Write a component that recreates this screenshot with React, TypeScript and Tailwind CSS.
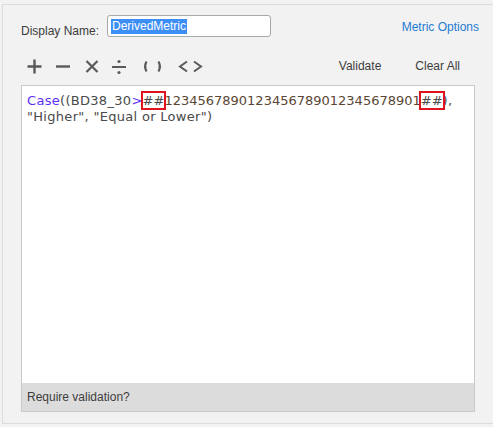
import React from 'react';

const Plus = () => (
  <svg width="17" height="17" viewBox="0 0 17 17">
    <path d="M8.5 1.5v14M1.5 8.5h14" stroke="#5a5a5a" strokeWidth="2.4" />
  </svg>
);
const Minus = () => (
  <svg width="16" height="17" viewBox="0 0 16 17">
    <path d="M1 8.5h14" stroke="#5a5a5a" strokeWidth="2.4" />
  </svg>
);
const Times = () => (
  <svg width="14" height="17" viewBox="0 0 14 17">
    <path d="M1.5 3l11 11M12.5 3l-11 11" stroke="#5a5a5a" strokeWidth="2.2" />
  </svg>
);
const Divide = () => (
  <svg width="16" height="17" viewBox="0 0 16 17">
    <path d="M1 9h14" stroke="#5a5a5a" strokeWidth="2" />
    <circle cx="8" cy="3.5" r="1.6" fill="#5a5a5a" />
    <circle cx="8" cy="14.5" r="1.6" fill="#5a5a5a" />
  </svg>
);
const Parens = () => (
  <svg width="21" height="17" viewBox="0 0 21 17">
    <path d="M4.5 3.5Q1.8 8.5 4.5 13.5M16.5 3.5Q19.2 8.5 16.5 13.5" stroke="#5a5a5a" strokeWidth="2.2" fill="none" />
  </svg>
);
const Angles = () => (
  <svg width="25" height="17" viewBox="0 0 25 17">
    <path d="M9 3.5L2 8.5l7 5M16 3.5l7 5-7 5" stroke="#5a5a5a" strokeWidth="2" fill="none" />
  </svg>
);

export default function App() {
  return (
    <div className="w-[493px] h-[427px] bg-[#f2f2f2] pt-[4px] pl-[2px] pb-[3px] font-['Liberation_Sans',Arial,sans-serif] text-[12px] text-[#333]">
      <div className="h-full border-t border-l border-b border-[#dcdcdc] flex flex-col">
        <div className="flex items-start pt-[10px] pl-[18px] pr-[14px] h-[46px]">
          <span className="mt-[7px] w-[86px] text-[#3c3c3c]">Display Name:</span>
          <div className="w-[164px] h-[22px] bg-white border border-[#a9a9a9] rounded-[3px] flex items-center px-[3px]">
            <span className="bg-[#3d8ef5] text-white leading-[15px] px-[1px]">DerivedMetric</span>
          </div>
          <span className="ml-auto mt-[3px] text-[#1f7bd3]">Metric Options</span>
        </div>
        <div className="flex items-center h-[34px] pb-[4px] pl-[23px] pr-[33px]">
          <div className="flex items-center gap-[12px]">
            <Plus />
            <Minus />
            <span className="ml-[2px]"><Times /></span>
            <Divide />
            <span className="ml-[3px]"><Parens /></span>
            <span className="ml-[3px]"><Angles /></span>
          </div>
          <span className="ml-auto text-[#3c3c3c]">Validate</span>
          <span className="ml-[34px] text-[#3c3c3c]">Clear All</span>
        </div>
        <div className="ml-[18px] w-[454px] h-[327px] bg-white border border-[#c9c9c9] flex flex-col">
          <div className="flex-1 px-[5px] pt-[7px] font-['DejaVu_Sans',Verdana,sans-serif] text-[13px] leading-[16px] tracking-[0.3px] text-[#4a4a4a]">
            <span className="text-[#5b2ef5]">Case</span>((BD38_30<span className="text-[#5b2ef5]">&gt;</span>
            <span className="tracking-normal outline-2 outline-[#e0141e]">##</span>
            <span className="tracking-normal text-[#5a4634]">1234567890123456789012345678901</span>
            <span className="tracking-normal outline-2 outline-[#e0141e]">##</span>),
            <br />
            "Higher", "Equal or Lower")
          </div>
          <div className="h-[28px] bg-[#dcdcdc] flex items-center pl-[5px] text-[#3c3c3c]">Require validation?</div>
        </div>
      </div>
    </div>
  );
}
